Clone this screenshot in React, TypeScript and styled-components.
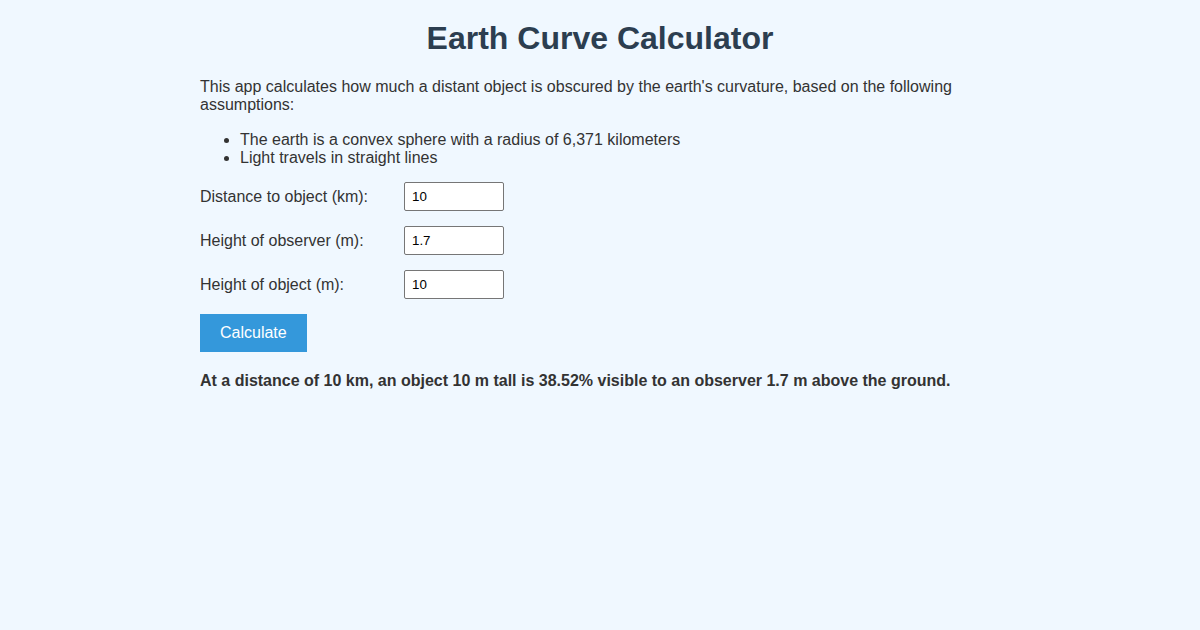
import React, { useState } from "react";
import styled, { createGlobalStyle } from "styled-components";

const GlobalStyle = createGlobalStyle`
  body {
    margin: 0;
    background: #f0f8ff;
    font-family: "Liberation Sans", Arial, sans-serif;
    color: #333;
  }
`;

const Page = styled.main`
  max-width: 800px;
  margin: 0 auto;
  padding: 20px 0;
`;

const Title = styled.h1`
  margin: 0 0 21px;
  font-size: 32px;
  line-height: 37px;
  text-align: center;
  color: #2c3e50;
`;

const Intro = styled.p`
  margin: 0 0 17px;
  font-size: 16px;
`;

const Assumptions = styled.ul`
  margin: 0 0 15px;
  padding-left: 40px;
  font-size: 16px;
`;

const Row = styled.div`
  display: flex;
  align-items: center;
  margin-bottom: 15px;
`;

const Label = styled.label`
  width: 204px;
  font-size: 16px;
`;

const Input = styled.input`
  box-sizing: border-box;
  width: 100px;
  height: 29px;
  padding: 5px 7px;
  border: 1px solid #767676;
  border-radius: 2px;
  background: #fff;
  font-family: "Liberation Sans", Arial, sans-serif;
  font-size: 13.33px;
  color: #000;
`;

const Button = styled.button`
  display: block;
  padding: 10px 20px;
  border: none;
  background: #3498db;
  color: #fff;
  font-family: "Liberation Sans", Arial, sans-serif;
  font-size: 16px;
  line-height: 18px;
  cursor: pointer;
`;

const Result = styled.p`
  margin: 20px 0 0;
  font-size: 16px;
  font-weight: bold;
`;

function visibility(distKm: number, hObs: number, hObj: number): number {
  const R = 6371000;
  const d = distKm * 1000;
  const horizon = Math.sqrt(2 * R * hObs + hObs * hObs);
  const rest = d - horizon;
  if (rest <= 0) return 100;
  const hidden = Math.sqrt(rest * rest + R * R) - R;
  const pct = ((hObj - hidden) / hObj) * 100;
  return Math.max(0, Math.min(100, pct));
}

const App: React.FC = () => {
  const [dist, setDist] = useState("10");
  const [obs, setObs] = useState("1.7");
  const [obj, setObj] = useState("10");
  const [result, setResult] = useState(
    "At a distance of 10 km, an object 10 m tall is 38.52% visible to an observer 1.7 m above the ground."
  );

  const calculate = (): void => {
    const pct = visibility(parseFloat(dist), parseFloat(obs), parseFloat(obj));
    setResult(
      `At a distance of ${dist} km, an object ${obj} m tall is ${pct.toFixed(
        2
      )}% visible to an observer ${obs} m above the ground.`
    );
  };

  return (
    <>
      <GlobalStyle />
      <Page>
        <Title>Earth Curve Calculator</Title>
        <Intro>
          This app calculates how much a distant object is obscured by the
          earth's curvature, based on the following assumptions:
        </Intro>
        <Assumptions>
          <li>The earth is a convex sphere with a radius of 6,371 kilometers</li>
          <li>Light travels in straight lines</li>
        </Assumptions>
        <Row>
          <Label htmlFor="dist">Distance to object (km):</Label>
          <Input id="dist" value={dist} onChange={(e) => setDist(e.target.value)} />
        </Row>
        <Row>
          <Label htmlFor="obs">Height of observer (m):</Label>
          <Input id="obs" value={obs} onChange={(e) => setObs(e.target.value)} />
        </Row>
        <Row>
          <Label htmlFor="obj">Height of object (m):</Label>
          <Input id="obj" value={obj} onChange={(e) => setObj(e.target.value)} />
        </Row>
        <Button onClick={calculate}>Calculate</Button>
        <Result>{result}</Result>
      </Page>
    </>
  );
};

export default App;
